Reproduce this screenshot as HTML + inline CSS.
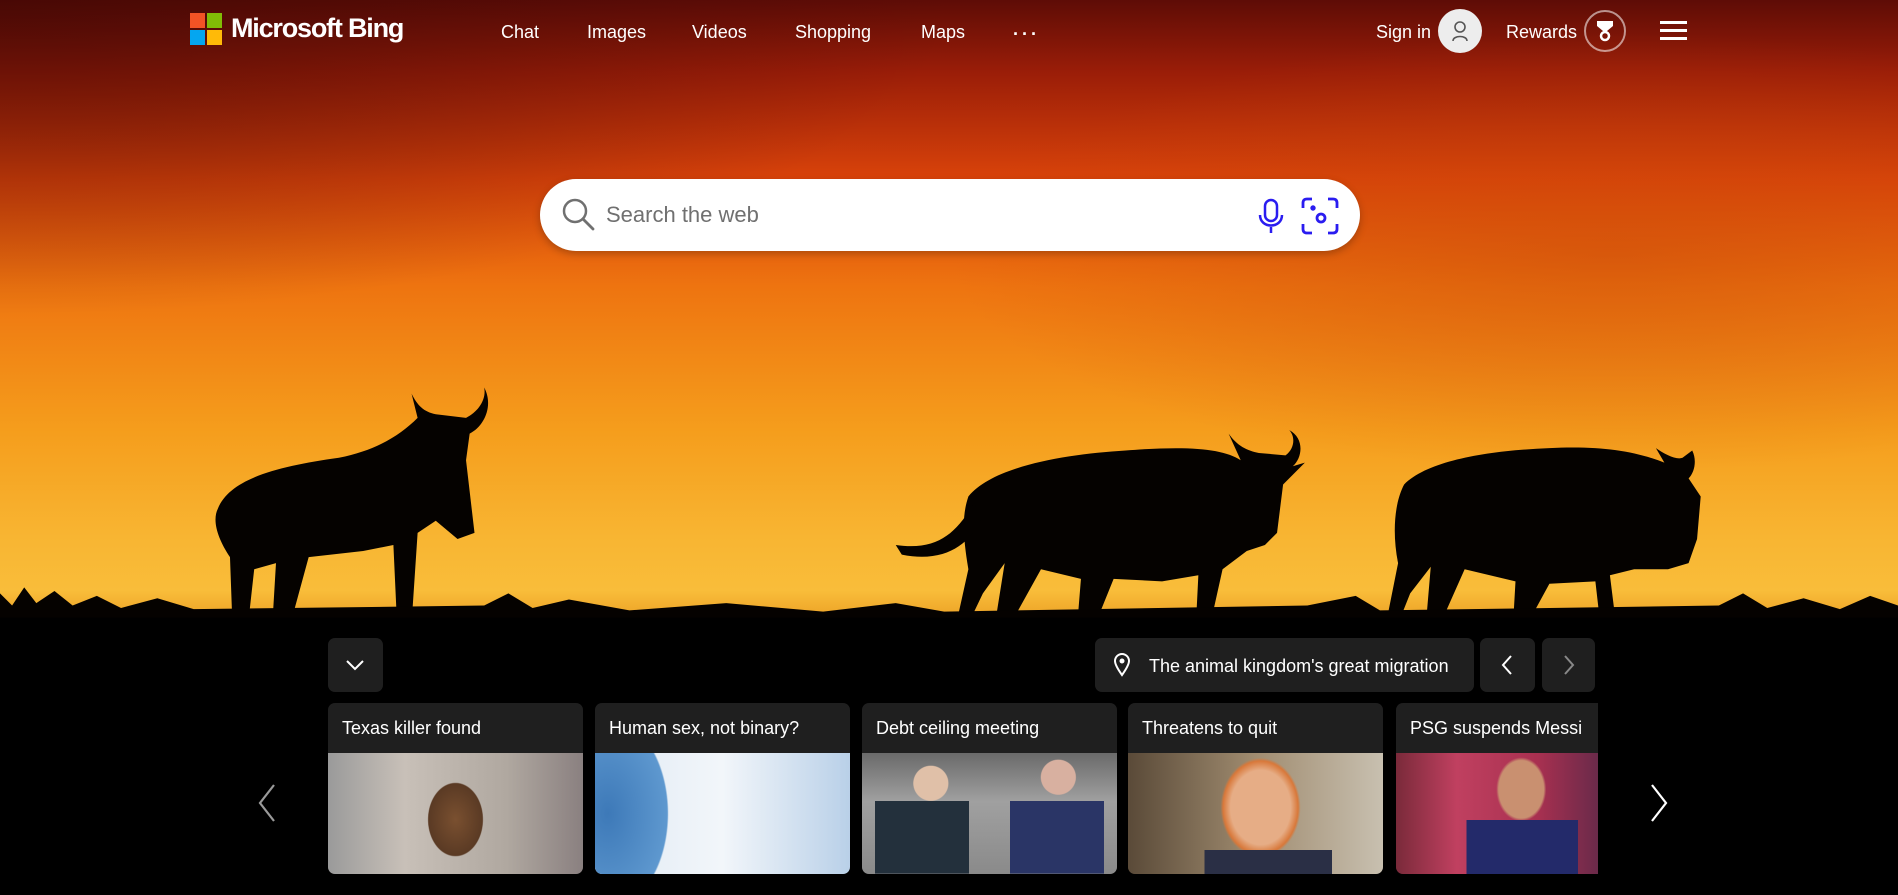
<!DOCTYPE html>
<html><head><meta charset="utf-8"><style>
*{margin:0;padding:0;box-sizing:border-box}
body{width:1898px;height:895px;overflow:hidden;position:relative;background:#000;font-family:"Liberation Sans",sans-serif;color:#fff}
.abs{position:absolute}
.nav{position:absolute;top:22px;font-size:18px;color:#fff}
.btn{position:absolute;background:#1f1f1f;border-radius:7px}
.card{position:absolute;top:703px;height:171px;width:255px;border-radius:7px;overflow:hidden;background:#1f1f1f}
.card .h{height:50px;padding:15px 14px;font-size:18px;white-space:nowrap}
.card .i{height:121px}
</style></head><body>
<svg class="abs" style="left:0;top:0" width="1898" height="895" viewBox="0 0 1568 739" preserveAspectRatio="none">
<defs>
<linearGradient id="sky" x1="0" y1="0" x2="0" y2="1">
<stop offset="0" stop-color="#5e0c06"/>
<stop offset="0.08" stop-color="#9a1d08"/>
<stop offset="0.2" stop-color="#d9430a"/>
<stop offset="0.32" stop-color="#ee7410"/>
<stop offset="0.48" stop-color="#f59d1c"/>
<stop offset="0.6" stop-color="#f8b532"/>
<stop offset="0.66" stop-color="#f9bd3a"/>
<stop offset="0.7" stop-color="#e89a20"/>
</linearGradient>
<radialGradient id="cl" cx="0.85" cy="0.4" r="0.35">
<stop offset="0" stop-color="#c84a08" stop-opacity="0.5"/>
<stop offset="1" stop-color="#c84a08" stop-opacity="0"/>
</radialGradient>
<radialGradient id="tl" cx="0" cy="0" r="0.5">
<stop offset="0" stop-color="#3a0604" stop-opacity="0.6"/>
<stop offset="1" stop-color="#3a0604" stop-opacity="0"/>
</radialGradient>
</defs>
<rect width="1568" height="739" fill="url(#sky)"/>
<rect width="1568" height="520" fill="url(#cl)"/>
<rect width="1568" height="520" fill="url(#tl)"/>
<g fill="#050200">
<path d="M180,420 C190,395 230,385 280,378 C310,372 330,360 345,345 L340,325 C345,335 350,340 360,342 L385,345 C395,340 402,330 400,320 C408,335 400,352 388,358 L385,380 L392,440 L378,445 L360,430 L345,440 L340,515 L328,515 L325,450 L300,455 L255,460 L240,515 L225,515 L228,465 L210,470 L205,515 L192,515 L190,460 C180,445 175,430 180,420 Z"/>
<path d="M800,410 C820,385 880,375 930,372 C980,368 1010,370 1025,380 L1015,358 C1022,368 1030,372 1040,374 L1062,376 C1070,370 1070,360 1065,355 C1078,362 1076,378 1068,385 L1078,382 L1060,400 L1055,440 L1045,450 L1030,455 L1010,470 L1000,515 L988,515 L990,475 L960,480 L920,478 L905,515 L890,515 L893,478 L860,470 L835,515 L822,515 L830,465 L812,490 L800,515 L790,515 L800,470 C795,440 795,425 800,410 Z"/>
<path d="M805,415 C790,440 775,455 740,450 L745,458 C780,465 800,450 810,430 Z"/>
<path d="M1160,400 C1180,380 1230,372 1280,370 C1320,368 1350,372 1375,382 L1368,370 C1375,375 1385,380 1390,378 L1398,372 C1402,380 1400,390 1395,395 L1405,410 L1402,445 L1395,465 L1378,470 L1350,470 L1330,475 L1335,515 L1322,515 L1318,480 L1280,482 L1262,515 L1250,515 L1252,480 L1210,470 L1190,515 L1178,515 L1182,468 L1165,490 L1155,515 L1145,515 L1155,465 C1150,440 1152,415 1160,400 Z"/>
<path d="M0,739 L0,490 L10,500 L20,485 L30,498 L45,488 L60,500 L80,492 L100,502 L130,494 L160,503 L400,500 L420,490 L440,502 L470,495 L520,504 L600,498 L680,505 L740,498 L780,505 L1080,500 L1120,492 L1140,504 L1420,500 L1440,490 L1460,502 L1490,494 L1520,503 L1545,492 L1568,500 L1568,739 Z"/>
</g>
<rect y="510" width="1568" height="229" fill="#000"/>
</svg>

<!-- header -->
<div class="abs" style="left:190px;top:13px;width:15px;height:15px;background:#f35325"></div>
<div class="abs" style="left:207px;top:13px;width:15px;height:15px;background:#81bc06"></div>
<div class="abs" style="left:190px;top:30px;width:15px;height:15px;background:#05a6f0"></div>
<div class="abs" style="left:207px;top:30px;width:15px;height:15px;background:#ffba08"></div>
<div class="abs" style="left:231px;top:13px;font-size:27px;font-weight:bold;letter-spacing:-1.2px">Microsoft Bing</div>
<div class="nav" style="left:501px">Chat</div>
<div class="nav" style="left:587px">Images</div>
<div class="nav" style="left:692px">Videos</div>
<div class="nav" style="left:795px">Shopping</div>
<div class="nav" style="left:921px">Maps</div>
<div class="nav" style="left:1013px;top:24px;letter-spacing:3px;font-weight:bold">···</div>
<div class="nav" style="left:1376px">Sign in</div>
<div class="abs" style="left:1438px;top:9px;width:44px;height:44px;border-radius:50%;background:#ededed"></div>
<svg class="abs" style="left:1450px;top:20px" width="20" height="22" viewBox="0 0 20 22"><circle cx="10" cy="7" r="5" fill="none" stroke="#555" stroke-width="1.6"/><path d="M3,21 C3,15 17,15 17,21" fill="none" stroke="#555" stroke-width="1.6"/></svg>
<div class="nav" style="left:1506px">Rewards</div>
<div class="abs" style="left:1584px;top:10px;width:42px;height:42px;border-radius:50%;border:2px solid rgba(255,255,255,0.55)"></div>
<svg class="abs" style="left:1593px;top:19px" width="24" height="24" viewBox="0 0 24 24"><path d="M4,2 L20,2 L20,7 L14,12 L10,12 L4,7 Z" fill="#fff"/><circle cx="12" cy="17" r="4" fill="none" stroke="#fff" stroke-width="2.5"/></svg>
<div class="abs" style="left:1660px;top:21px;width:27px;height:3px;background:#fff"></div>
<div class="abs" style="left:1660px;top:29px;width:27px;height:3px;background:#fff"></div>
<div class="abs" style="left:1660px;top:37px;width:27px;height:3px;background:#fff"></div>

<!-- search -->
<div class="abs" style="left:540px;top:179px;width:820px;height:72px;border-radius:36px;background:#fff;box-shadow:0 3px 8px rgba(0,0,0,0.25)"></div>
<svg class="abs" style="left:560px;top:196px" width="38" height="38" viewBox="0 0 38 38"><circle cx="15" cy="15" r="11" fill="none" stroke="#707070" stroke-width="2.5"/><path d="M23,23 L33,33" stroke="#707070" stroke-width="2.8" stroke-linecap="round"/></svg>
<div class="abs" style="left:606px;top:202px;font-size:22px;color:#707070">Search the web</div>
<svg class="abs" style="left:1257px;top:197px" width="28" height="38" viewBox="0 0 28 38"><rect x="8" y="3" width="12" height="21" rx="6" fill="none" stroke="#2a1cf0" stroke-width="2.5"/><path d="M3,18 C3,32 25,32 25,18 M14,30 L14,36" fill="none" stroke="#2a1cf0" stroke-width="2.5"/></svg>
<svg class="abs" style="left:1301px;top:197px" width="38" height="38" viewBox="0 0 38 38" fill="none" stroke="#2a1cf0" stroke-width="2.8"><path d="M2,11 L2,6 Q2,2 6,2 L11,2 M27,2 L32,2 Q36,2 36,6 L36,11 M36,27 L36,32 Q36,36 32,36 L27,36 M11,36 L6,36 Q2,36 2,32 L2,27"/><circle cx="20" cy="21" r="4"/><circle cx="12" cy="11" r="1.3" fill="#2a1cf0"/></svg>

<!-- bottom controls -->
<div class="btn" style="left:328px;top:638px;width:55px;height:54px"></div>
<svg class="abs" style="left:345px;top:658px" width="20" height="14" viewBox="0 0 20 14"><path d="M2,3 L10,11 L18,3" fill="none" stroke="#fff" stroke-width="2"/></svg>
<div class="btn" style="left:1095px;top:638px;width:379px;height:54px"></div>
<svg class="abs" style="left:1113px;top:653px" width="18" height="24" viewBox="0 0 18 24"><path d="M9,22 C4,15 2,11 2,8 A7,7 0 0 1 16,8 C16,11 14,15 9,22 Z" fill="none" stroke="#fff" stroke-width="2"/><circle cx="9" cy="8" r="2.5" fill="#fff"/></svg>
<div class="abs" style="left:1149px;top:656px;font-size:18px">The animal kingdom's great migration</div>
<div class="btn" style="left:1480px;top:638px;width:55px;height:54px"></div>
<svg class="abs" style="left:1500px;top:654px" width="14" height="22" viewBox="0 0 14 22"><path d="M11,2 L3,11 L11,20" fill="none" stroke="#fff" stroke-width="2"/></svg>
<div class="btn" style="left:1542px;top:638px;width:53px;height:54px"></div>
<svg class="abs" style="left:1562px;top:654px" width="14" height="22" viewBox="0 0 14 22"><path d="M3,2 L11,11 L3,20" fill="none" stroke="#888" stroke-width="2"/></svg>

<!-- cards -->
<div class="card" style="left:328px"><div class="h">Texas killer found</div><div class="i" style="background:radial-gradient(ellipse 45px 60px at 50% 55%,#7a5030 0,#5a3a24 60%,transparent 62%),linear-gradient(90deg,#9a9a9a,#c8c0b8 30%,#b0a8a0 70%,#8a8080)"></div></div>
<div class="card" style="left:595px"><div class="h">Human sex, not binary?</div><div class="i" style="background:radial-gradient(ellipse 70px 110px at 5% 50%,#3d79b8 0,#5e98cf 85%,transparent 87%),linear-gradient(90deg,#dfe9f3,#f2f6fa 50%,#b9d0e8)"></div></div>
<div class="card" style="left:862px"><div class="h">Debt ceiling meeting</div><div class="i" style="background:linear-gradient(90deg,transparent 0,transparent 5%,#23303c 5%,#23303c 42%,transparent 42%,transparent 58%,#2a3566 58%,#2a3566 95%,transparent 95%) bottom/100% 60% no-repeat,radial-gradient(circle 18px at 27% 25%,#e0c0a8 95%,transparent),radial-gradient(circle 18px at 77% 20%,#d8b0a0 95%,transparent),linear-gradient(#6a6a6a,#a0a0a0 40%,#8a8a8a)"></div></div>
<div class="card" style="left:1128px"><div class="h">Threatens to quit</div><div class="i" style="background:linear-gradient(90deg,transparent 0,transparent 30%,#2a2f45 30%,#2a2f45 80%,transparent 80%) bottom/100% 20% no-repeat,radial-gradient(ellipse 50px 62px at 52% 45%,#e6ad86 60%,#d8783a 75%,transparent 80%),linear-gradient(90deg,#5a4a38,#a08c70 50%,#c8c0b0)"></div></div>
<div class="card" style="left:1396px;width:202px;border-radius:7px 0 0 7px"><div class="h">PSG suspends Messi</div><div class="i" style="background:linear-gradient(90deg,transparent 0,transparent 35%,#232a6a 35%,#232a6a 90%,transparent 90%) bottom/100% 45% no-repeat,radial-gradient(ellipse 25px 32px at 62% 30%,#c99070 90%,transparent),linear-gradient(90deg,#7a2a3a,#c04060 30%,#a83050 70%,#6a2a4a)"></div></div>
<svg class="abs" style="left:256px;top:783px" width="22" height="40" viewBox="0 0 22 40"><path d="M18,2 L4,20 L18,38" fill="none" stroke="#9a9a9a" stroke-width="2.2"/></svg>
<svg class="abs" style="left:1648px;top:783px" width="22" height="40" viewBox="0 0 22 40"><path d="M4,2 L18,20 L4,38" fill="none" stroke="#fff" stroke-width="2.2"/></svg>
</body></html>
